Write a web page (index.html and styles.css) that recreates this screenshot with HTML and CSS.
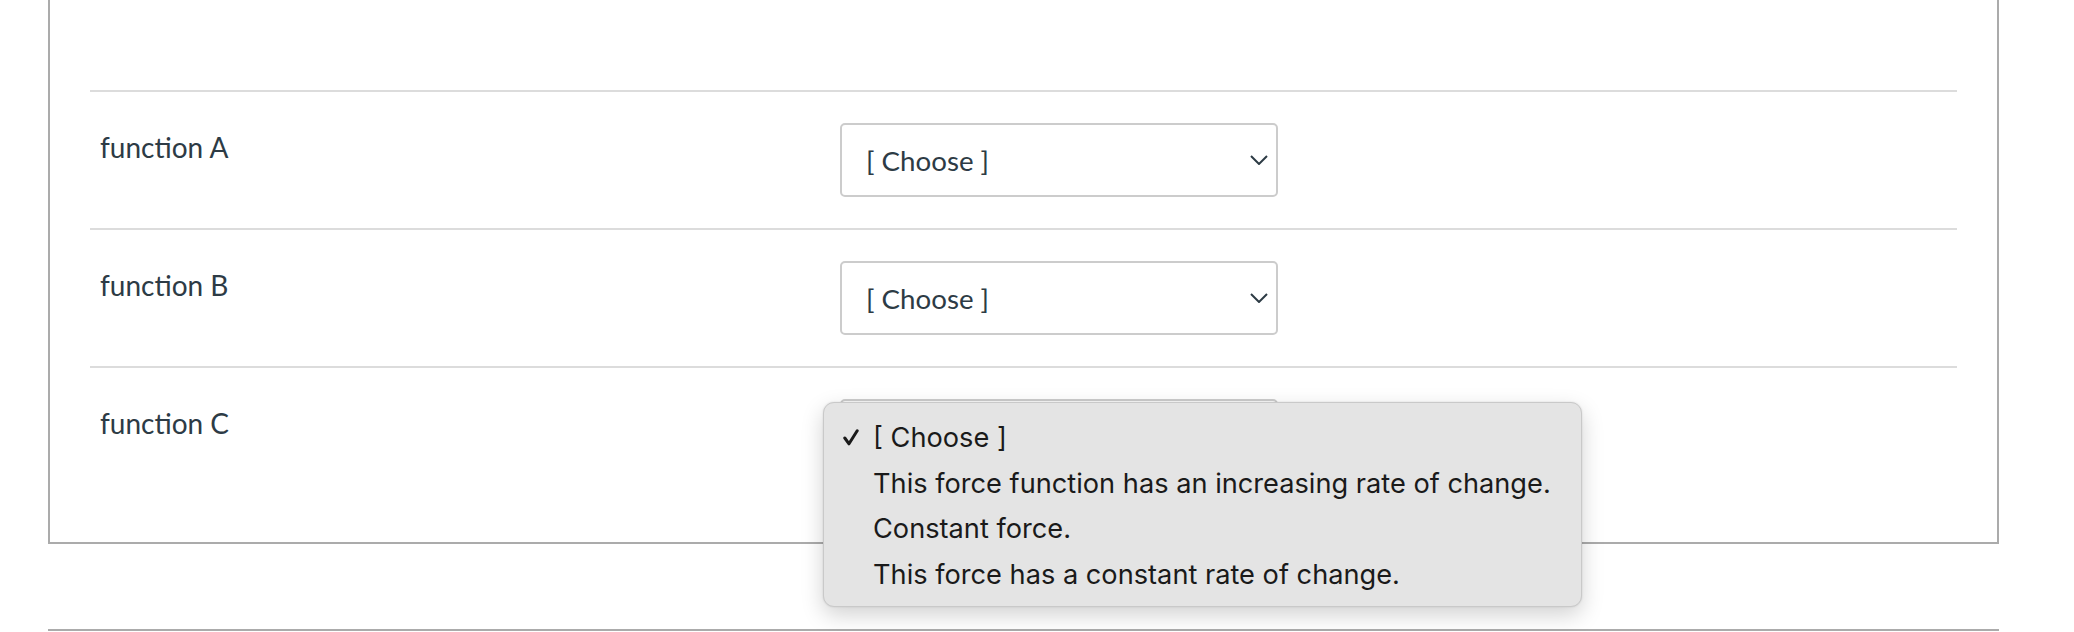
FILE: index.html
```html
<!DOCTYPE html>
<html lang="en">
<head>
<meta charset="utf-8">
<title>Matching question</title>
<link rel="stylesheet" href="styles.css">
</head>
<body>
<div class="page">
  <div class="question">
    <div class="question-text"></div>
    <div class="answers">
      <div class="answer">
        <div class="answer-label">function A</div>
        <div class="select-wrap">
          <div class="select">
            <span class="select-value">[ Choose ]</span>
            <svg class="chevron" width="18" height="10" viewBox="0 0 18 10"><polyline points="1,1 9,9 17,1" fill="none" stroke="#2d3b45" stroke-width="2"/></svg>
          </div>
        </div>
      </div>
      <div class="answer">
        <div class="answer-label">function B</div>
        <div class="select-wrap">
          <div class="select">
            <span class="select-value">[ Choose ]</span>
            <svg class="chevron" width="18" height="10" viewBox="0 0 18 10"><polyline points="1,1 9,9 17,1" fill="none" stroke="#2d3b45" stroke-width="2"/></svg>
          </div>
        </div>
      </div>
      <div class="answer">
        <div class="answer-label">function C</div>
        <div class="select-wrap">
          <div class="select select-open">
            <span class="select-value">[ Choose ]</span>
            <svg class="chevron" width="18" height="10" viewBox="0 0 18 10"><polyline points="1,1 9,9 17,1" fill="none" stroke="#2d3b45" stroke-width="2"/></svg>
          </div>
          <ul class="popup">
            <li class="option selected"><svg class="check" width="16" height="17" viewBox="0 0 16 17"><polyline points="1.8,9 6,14.8 14.2,1.8" fill="none" stroke="#1a1a1a" stroke-width="3" stroke-linecap="round" stroke-linejoin="round"/></svg>[ Choose ]</li>
            <li class="option">This force function has an increasing rate of change.</li>
            <li class="option">Constant force.</li>
            <li class="option">This force has a constant rate of change.</li>
          </ul>
        </div>
      </div>
    </div>
  </div>
  <div class="footer-line"></div>
</div>
</body>
</html>
```

FILE: styles.css
```css
html, body {
  margin: 0;
  padding: 0;
  background: #ffffff;
}

body {
  font-family: Lato, "Liberation Sans", sans-serif;
  color: #2d3b45;
  overflow: hidden;
}

.page {
  padding-left: 48px;
  width: 1951px;
}

.question {
  border: 2px solid #ababab;
  border-top: none;
  padding-bottom: 38px;
}

.question-text {
  height: 90px;
}

.answers {
  margin: 0 40px;
}

.answer {
  display: flex;
  align-items: flex-start;
  border-top: 2px solid #dcdcdc;
  padding: 31px 0 31px 10px;
}

.answer-label {
  width: 740px;
  font-size: 28px;
  line-height: 39px;
  margin-top: 5px;
}

.select-wrap {
  position: relative;
}

.select {
  box-sizing: border-box;
  width: 438px;
  height: 74px;
  border: 2px solid #cccccc;
  border-radius: 5px;
  background: #ffffff;
  display: flex;
  align-items: center;
  justify-content: space-between;
  padding: 0 8px 0 24px;
}

.select-open .select-value {
  visibility: hidden;
}

.select-value {
  font-size: 27.7px;
  color: #2d3b45;
}

.chevron {
  display: block;
}

.popup {
  position: absolute;
  left: -17px;
  top: 3px;
  width: 759px;
  box-sizing: border-box;
  margin: 0;
  padding: 12px 0 9px 0;
  list-style: none;
  background: #e4e4e4;
  border: 1px solid #c9c9c9;
  border-radius: 11px;
  box-shadow: 0 8px 22px rgba(0, 0, 0, 0.18), 0 0 2px rgba(0, 0, 0, 0.12);
  font-family: Inter, "Liberation Sans", sans-serif;
  font-size: 27.2px;
  color: #1a1a1a;
}

.option {
  position: relative;
  line-height: 45.5px;
  padding-left: 49px;
  white-space: nowrap;
}

.check {
  position: absolute;
  left: 19px;
  top: 14px;
}

.footer-line {
  margin-top: 85px;
  height: 2px;
  background: #ababab;
}
```
